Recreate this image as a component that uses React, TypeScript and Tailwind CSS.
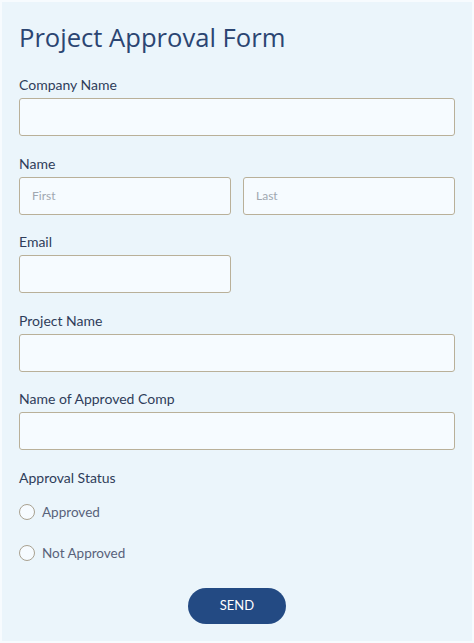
import { useState } from "react";

const inputClass =
  "h-[38px] w-full rounded-[3px] border border-[#b9b099] bg-[#f6fbff] px-3 text-[12px] text-[#3a4660] placeholder:text-[#a0a7b0] outline-none";

function Field({ label, children }: { label: string; children: React.ReactNode }) {
  return (
    <div className="mb-[19.5px]">
      <label className="mb-[5px] block text-[14px] leading-[16px] text-[#2f3d5a]">
        {label}
      </label>
      {children}
    </div>
  );
}

export default function App() {
  const [status, setStatus] = useState("");

  return (
    <div className="min-h-[643px] bg-[#f7fbfe] p-[2px] font-['Lato','Noto_Sans',sans-serif]">
      <div className="min-h-[639px] bg-[#ebf5fb] px-[17px] pt-[18px]">
        <h1 className="mb-[21px] font-['Open_Sans',sans-serif] text-[25.6px] leading-[36px] text-[#2b4572]">
          Project Approval Form
        </h1>

        <Field label="Company Name">
          <input type="text" className={inputClass} />
        </Field>

        <Field label="Name">
          <div className="flex gap-3">
            <input type="text" placeholder="First" className={inputClass} />
            <input type="text" placeholder="Last" className={inputClass} />
          </div>
        </Field>

        <Field label="Email">
          <div className="w-[212px]">
            <input type="email" className={inputClass} />
          </div>
        </Field>

        <Field label="Project Name">
          <input type="text" className={inputClass} />
        </Field>

        <Field label="Name of Approved Comp">
          <input type="text" className={inputClass} />
        </Field>

        <div>
          <div className="mb-[18px] text-[14px] leading-[16px] text-[#2f3d5a]">
            Approval Status
          </div>
          <div className="flex flex-col gap-[25px]">
            {["Approved", "Not Approved"].map((opt) => (
              <label key={opt} className="flex items-center gap-[7px] text-[13.5px] leading-[16px] text-[#58627a]">
                <span
                  onClick={() => setStatus(opt)}
                  className="flex h-[16px] w-[16px] items-center justify-center rounded-full border border-[#a9a190] bg-[#f6fbff]"
                >
                  {status === opt && <span className="h-[8px] w-[8px] rounded-full bg-[#234a83]" />}
                </span>
                {opt}
              </label>
            ))}
          </div>
        </div>

        <div className="mt-[27px] flex justify-center">
          <button
            type="button"
            className="h-[36px] w-[98px] rounded-full bg-[#234a83] text-[13px] text-white"
          >
            SEND
          </button>
        </div>
      </div>
    </div>
  );
}
